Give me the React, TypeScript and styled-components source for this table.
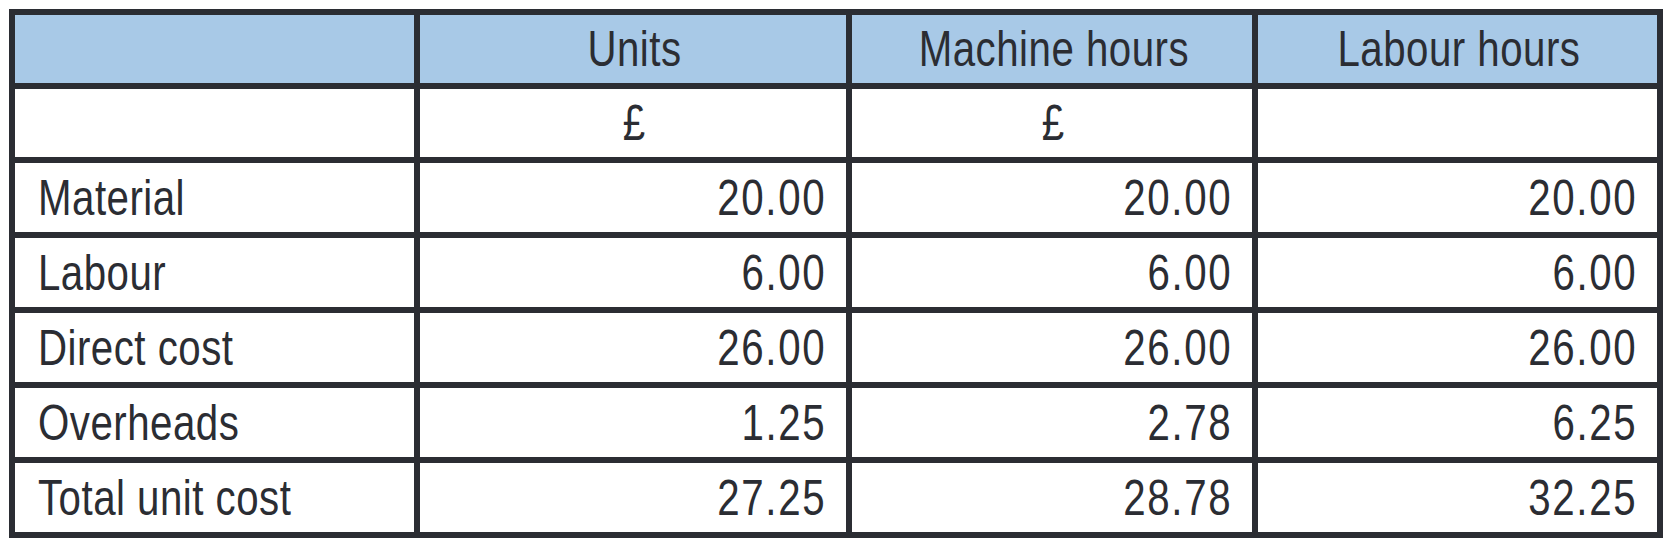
import React from "react";
import styled, { createGlobalStyle } from "styled-components";

const GlobalStyle = createGlobalStyle`
  html, body {
    margin: 0;
    padding: 0;
    background: #ffffff;
  }
  body {
    font-family: "Liberation Sans", Arial, sans-serif;
    color: #2b2d33;
  }
`;

const Page = styled.div`
  padding: 9px 0 0 9px;
`;

const Grid = styled.div`
  display: grid;
  grid-template-columns: 399px 426px 400px 399px;
  grid-template-rows: 68px 68px repeat(5, 69px);
  gap: 6px;
  padding: 6px;
  width: max-content;
  background: #2b2d33;
`;

type Align = "left" | "center" | "right";

const Cell = styled.div<{ $align: Align; $head?: boolean }>`
  display: flex;
  align-items: center;
  justify-content: ${(p) =>
    p.$align === "right" ? "flex-end" : p.$align === "center" ? "center" : "flex-start"};
  padding: 0 20px 0 23px;
  background: ${(p) => (p.$head ? "#a8c9e7" : "#ffffff")};
`;

const Text = styled.span<{ $align: Align; $num?: boolean }>`
  display: inline-block;
  font-size: 50px;
  line-height: 1;
  letter-spacing: ${(p) => (p.$num ? "2px" : "0.6px")};
  color: #2b2d33;
  white-space: nowrap;
  transform: scaleX(0.805);
  transform-origin: ${(p) => p.$align} center;
`;

const headers = ["", "Units", "Machine hours", "Labour hours"];
const units = ["", "£", "£", ""];
const rows: [string, string, string, string][] = [
  ["Material", "20.00", "20.00", "20.00"],
  ["Labour", "6.00", "6.00", "6.00"],
  ["Direct cost", "26.00", "26.00", "26.00"],
  ["Overheads", "1.25", "2.78", "6.25"],
  ["Total unit cost", "27.25", "28.78", "32.25"],
];

export default function App() {
  return (
    <>
      <GlobalStyle />
      <Page>
        <Grid>
          {headers.map((h, i) => (
            <Cell key={`h${i}`} $head $align="center">
              <Text $align="center">{h}</Text>
            </Cell>
          ))}
          {units.map((u, i) => (
            <Cell key={`u${i}`} $align="center">
              <Text $align="center">{u}</Text>
            </Cell>
          ))}
          {rows.map((r, ri) =>
            r.map((v, ci) => {
              const align: Align = ci === 0 ? "left" : "right";
              return (
                <Cell key={`r${ri}-${ci}`} $align={align}>
                  <Text $align={align} $num={ci > 0}>
                    {v}
                  </Text>
                </Cell>
              );
            })
          )}
        </Grid>
      </Page>
    </>
  );
}
